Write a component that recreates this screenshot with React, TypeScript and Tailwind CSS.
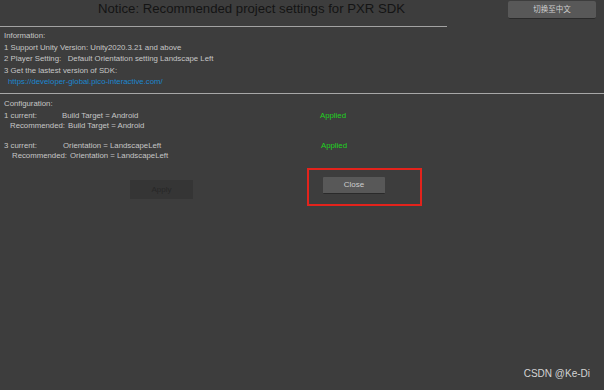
const font = { fontFamily: '"Liberation Sans", "Noto Sans CJK SC", sans-serif' };

function ConfigRow({
  label,
  value,
  labelWidth,
  indent,
  applied,
}: {
  label: string;
  value: string;
  labelWidth: string;
  indent: string;
  applied?: boolean;
}) {
  return (
    <div className="flex h-[10px] items-center leading-[10px]">
      <span className={`${indent} ${labelWidth} shrink-0 whitespace-nowrap`}>{label}</span>
      <span className="w-[258px] shrink-0 whitespace-nowrap">{value}</span>
      {applied && <span className="text-[#1fd31f]">Applied</span>}
    </div>
  );
}

export default function App() {
  return (
    <div style={font} className="flex h-[390px] w-[604px] flex-col bg-[#3d3d3d] text-[7.8px] text-[#c6c6c6]">
      <div className="flex h-[28px] shrink-0">
        <div className="h-[27px] w-[447px] border-b border-[#a3a3a3]">
          <h1 className="pl-[98px] text-[13.2px] leading-[17px] text-[#141414]">
            Notice: Recommended project settings for PXR SDK
          </h1>
        </div>
        <button className="ml-[61px] mt-[1px] h-[18px] w-[88px] rounded-[2px] border-b border-[#2a2a2a] bg-[#585858] text-[7.5px] text-[#cfcfcf]">
          切换至中文
        </button>
      </div>

      <div className="flex flex-col gap-[1.5px] border-b border-[#a8a8a8] pb-[6px] pl-[4px] pt-[3px] leading-[10px]">
        <p>Information:</p>
        <p>1 Support Unity Version: Unity2020.3.21 and above</p>
        <p>2 Player Setting:&nbsp;&nbsp; Default Orientation setting Landscape Left</p>
        <p>3 Get the lastest version of SDK:</p>
        <p className="pl-[4px] text-[#1b87d0]">https://developer-global.pico-interactive.com/</p>
      </div>

      <div className="flex flex-col pl-[4px] pt-[5px]">
        <p className="leading-[10px]">Configuration:</p>
        <div className="mt-[2px] flex flex-col">
          <ConfigRow label="1 current:" value="Build Target = Android" labelWidth="w-[58px]" indent="" applied />
          <ConfigRow label="Recommended:" value="Build Target = Android" labelWidth="w-[58px]" indent="ml-[6px]" />
        </div>
        <div className="mt-[10px] flex flex-col">
          <ConfigRow label="3 current:" value="Orientation = LandscapeLeft" labelWidth="w-[59px]" indent="" applied />
          <ConfigRow label="Recommended:" value="Orientation = LandscapeLeft" labelWidth="w-[58px]" indent="ml-[8px]" />
        </div>

        <div className="mt-[7px] flex items-start">
          <button className="ml-[126px] mt-[12px] h-[19px] w-[63px] bg-[#353535] text-[8px] text-[#272727]">
            Apply
          </button>
          <div className="ml-[114px] flex h-[38px] w-[115px] items-start border-2 border-[#e3231c] pl-[14px] pt-[7px]">
            <button className="h-[17px] w-[62px] rounded-[1px] border-b border-[#2a2a2a] bg-[#585858] text-[8px] text-[#cdcdcd]">
              Close
            </button>
          </div>
        </div>
      </div>

      <div className="mt-auto flex justify-end pb-[9px] pr-[14px]">
        <span className="text-[10px] text-[#d4d4d4]">CSDN @Ke-Di</span>
      </div>
    </div>
  );
}
